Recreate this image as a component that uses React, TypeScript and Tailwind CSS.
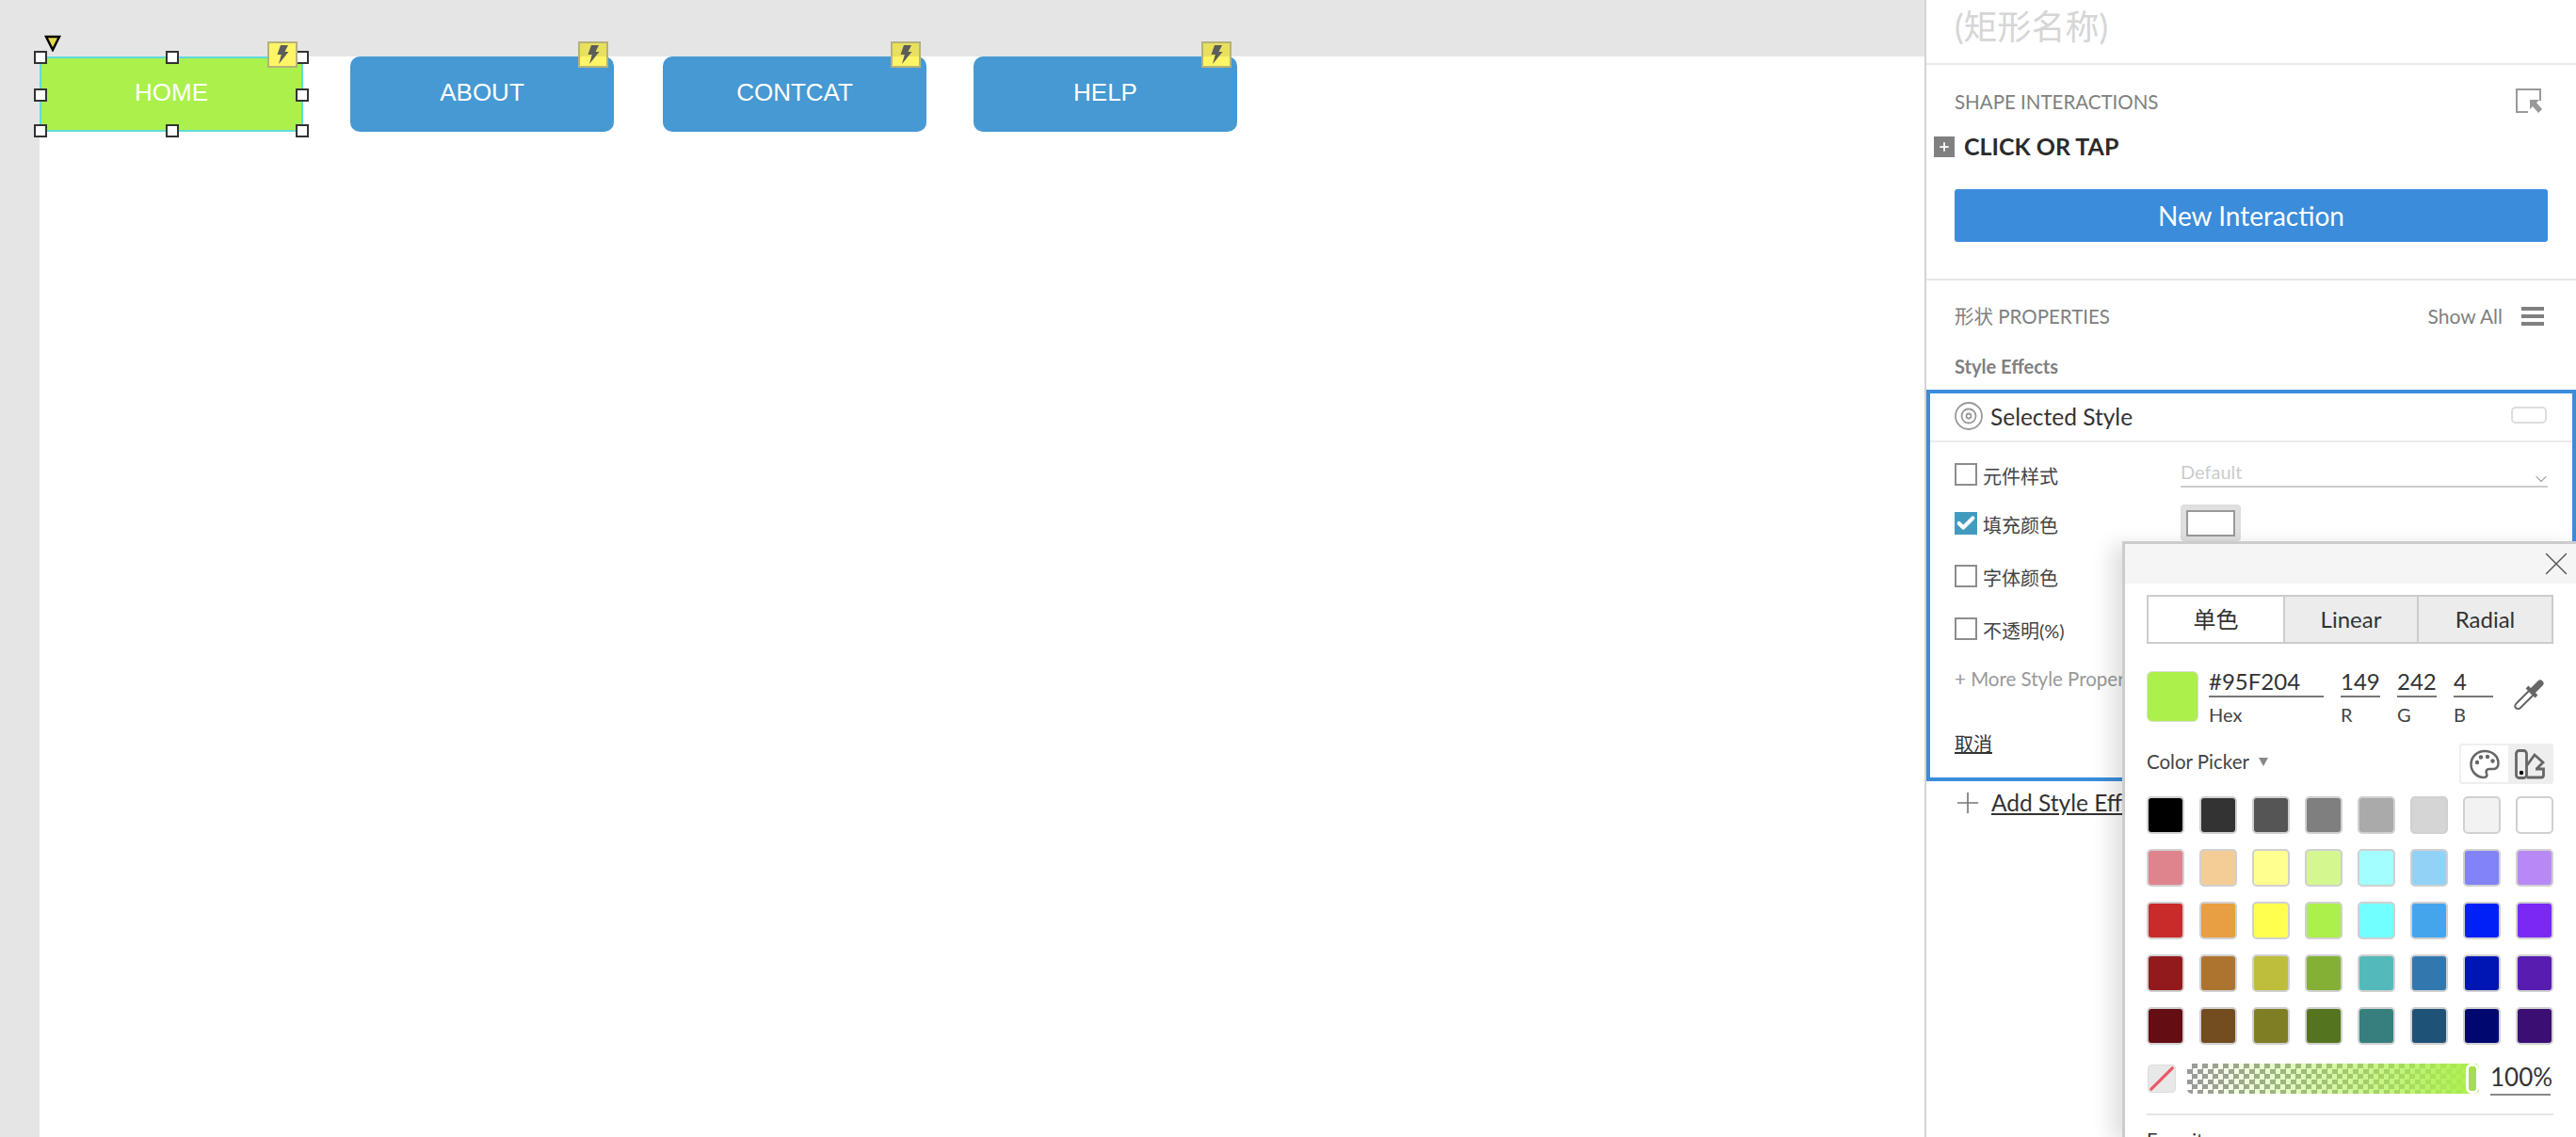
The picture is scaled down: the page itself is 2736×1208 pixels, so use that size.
import { Check, ChevronDown, Plus, X } from 'lucide-react';

const font = 'font-[Lato,"Noto_Sans_CJK_SC",sans-serif]';

const navButtons = [
  { label: 'ABOUT', left: 'left-[372px]', badge: 'left-[614px]' },
  { label: 'CONTCAT', left: 'left-[704px]', badge: 'left-[946px]' },
  { label: 'HELP', left: 'left-[1034px]', badge: 'left-[1276px]' },
];

const handles = [
  'left-[36px] top-[54px]',
  'left-[176px] top-[54px]',
  'left-[314px] top-[54px]',
  'left-[36px] top-[94px]',
  'left-[314px] top-[94px]',
  'left-[36px] top-[132px]',
  'left-[176px] top-[132px]',
  'left-[314px] top-[132px]',
];

const swatches = [
  'bg-[#000000]', 'bg-[#333333]', 'bg-[#555555]', 'bg-[#7f7f7f]', 'bg-[#aaaaaa]', 'bg-[#d5d5d5]', 'bg-[#f2f2f2]', 'bg-[#ffffff]',
  'bg-[#df848d]', 'bg-[#f4cd96]', 'bg-[#ffff90]', 'bg-[#d4f78f]', 'bg-[#a3ffff]', 'bg-[#92d2f6]', 'bg-[#8183f7]', 'bg-[#b889f6]',
  'bg-[#c92a2a]', 'bg-[#e89e42]', 'bg-[#ffff50]', 'bg-[#abf04b]', 'bg-[#72ffff]', 'bg-[#45a5ec]', 'bg-[#0020f5]', 'bg-[#7b28f5]',
  'bg-[#931a1c]', 'bg-[#ad7430]', 'bg-[#bfbd3c]', 'bg-[#83b035]', 'bg-[#54b9ba]', 'bg-[#3278af]', 'bg-[#0016b4]', 'bg-[#581cb0]',
  'bg-[#640d12]', 'bg-[#734c1f]', 'bg-[#807e25]', 'bg-[#55741f]', 'bg-[#377e7e]', 'bg-[#1f5277]', 'bg-[#00086f]', 'bg-[#3a0e72]',
];

function Bolt() {
  return (
    <svg viewBox="0 0 14 20" className="w-[14px] h-[20px]">
      <path d="M5 0h8L9.500 7H13.500L3 20 5.800 10H1.500z" fill="#5c5c5c" />
    </svg>
  );
}

function Badge({ className }: { className: string }) {
  return (
    <div className={`absolute top-[44px] w-[32px] h-[28px] border-2 border-[#b5b27a] flex items-center justify-center ${className}`}>
      <Bolt />
    </div>
  );
}

function SectionCheck({ label, checked }: { label: string; checked?: boolean }) {
  return (
    <div className="w-[240px] h-6 flex items-center shrink-0">
      {checked ? (
        <div className="w-6 h-6 bg-[#429bbf] flex items-center justify-center">
          <Check size={22} strokeWidth={4.5} className="text-white" />
        </div>
      ) : (
        <div className="w-6 h-6 border-2 border-[#8d8d8d] bg-white" />
      )}
      <span className="ml-[6px] mt-[3px] text-[20px] leading-6 text-[#444]">{label}</span>
    </div>
  );
}

function RgbField({ value, label }: { value: string; label: string }) {
  return (
    <div className="w-[42px]">
      <div className="h-[28px] border-b-2 border-[#777] text-[24px] leading-[22px] text-[#333]">{value}</div>
      <div className="mt-[6px] text-[20px] leading-6 text-[#444]">{label}</div>
    </div>
  );
}

export default function App() {
  return (
    <div className={`relative flex w-[2736px] h-[1208px] overflow-hidden bg-white ${font}`}>
      {/* canvas */}
      <div className="relative flex-1 flex flex-col">
        <div className="h-[60px] bg-[#e5e5e5] shrink-0" />
        <div className="flex-1 flex">
          <div className="w-[42px] bg-[#e5e5e5]" />
          <div className="flex-1 bg-white" />
        </div>

        <div className="absolute left-[42px] top-[60px] w-[280px] h-[80px] bg-[#abf04b] border-2 border-[#5fdcd8] flex items-center justify-center font-['Liberation_Sans'] text-[26px] text-white">
          <span className="-mt-[3px]">HOME</span>
        </div>
        {navButtons.map((b) => (
          <div
            key={b.label}
            className={`absolute top-[60px] w-[280px] h-[80px] rounded-[10px] bg-[#4699d2] flex items-center justify-center font-['Liberation_Sans'] text-[26px] text-white ${b.left}`}
          >
            <span className="-mt-[3px]">{b.label}</span>
          </div>
        ))}

        {handles.map((h) => (
          <div key={h} className={`absolute w-[14px] h-[14px] bg-white border-[2.500px] border-[#333] ${h}`} />
        ))}
        <svg viewBox="0 0 18 18" className="absolute left-[47px] top-[37px] w-[18px] h-[18px]">
          <path d="M2 2h14L9 16z" fill="#e3d84e" stroke="#000" strokeWidth="2.500" />
        </svg>
        <Badge className="left-[284px] bg-[#fff566]" />
        {navButtons.map((b) => (
          <Badge
            key={b.label}
            className={`bg-[linear-gradient(#e8e05e_0,#e8e05e_14px,#fff566_14px)] ${b.badge}`}
          />
        ))}
      </div>

      {/* right panel */}
      <div className="relative w-[692px] shrink-0 border-l-2 border-[#d4d4d4] bg-white flex flex-col">
        <div className="h-[69px] shrink-0 pl-[30px] pt-[6px] text-[36px] leading-[44px] text-[#d6d6d6] border-b-2 border-[#e8e8e8]">
          (矩形名称)
        </div>

        <div className="h-[227px] shrink-0 border-b-2 border-[#e8e8e8] box-content px-[30px]">
          <div className="pt-[25px] flex items-center justify-between pr-[6px]">
            <span className="text-[20.500px] leading-[26px] text-[#808080]">SHAPE INTERACTIONS</span>
            <svg viewBox="0 0 28 27" className="w-[28px] h-[27px]">
              <path d="M13 25H1V1h25v12" fill="none" stroke="#999" strokeWidth="2" />
              <path d="M15 12h10l-3 3 6 7-4 4-6-7-3 3z" fill="#999" />
            </svg>
          </div>
          <div className="mt-[24px] -ml-[22px] h-[22px] flex items-center">
            <div className="w-[22px] h-[22px] bg-[#808080] flex items-center justify-center">
              <Plus size={14} strokeWidth={3} className="text-white" />
            </div>
            <span className="ml-[10px] text-[25px] font-bold text-[#2b2b2b]">CLICK OR TAP</span>
          </div>
          <div className="mt-[34px] h-[56px] rounded-[3px] bg-[#3b8cdb] flex items-center justify-center text-[28px] text-white">
            New Interaction
          </div>
        </div>

        <div className="px-[30px] shrink-0">
          <div className="mt-[26px] h-6 flex items-center justify-between pr-[4px]">
            <span className="text-[20.500px] text-[#808080]">形状 PROPERTIES</span>
            <div className="flex items-center gap-[20px]">
              <span className="text-[21px] text-[#808080]">Show All</span>
              <div className="w-6 h-5 flex flex-col justify-between">
                <div className="h-[4px] bg-[#808080]" />
                <div className="h-[4px] bg-[#808080]" />
                <div className="h-[4px] bg-[#808080]" />
              </div>
            </div>
          </div>
          <div className="mt-[29px] h-6 flex items-center text-[20px] font-bold text-[#808080]">Style Effects</div>
        </div>

        {/* selected style block */}
        <div className="mt-[13px] h-[416px] shrink-0 border-4 border-[#3b8cdb]">
          <div className="h-[52px] border-b-2 border-[#eaeaea] pl-[26px] pr-[27px] flex items-center justify-between">
            <div className="flex items-center gap-[8px]">
              <svg viewBox="0 0 30 30" className="w-[30px] h-[30px] -mt-[2px]">
                <circle cx="15" cy="15" r="14" fill="none" stroke="#999" strokeWidth="1.800" />
                <circle cx="15" cy="15" r="7.500" fill="none" stroke="#999" strokeWidth="1.800" />
                <circle cx="15" cy="15" r="2.500" fill="none" stroke="#999" strokeWidth="1.800" />
              </svg>
              <span className="text-[24.500px] text-[#333]">Selected Style</span>
            </div>
            <div className="w-[38px] h-[18px] border-2 border-[#ddd] rounded-[5px] -mt-[4px]" />
          </div>

          <div className="pl-[26px]">
            <div className="mt-[22px] h-6 flex items-start">
              <SectionCheck label="元件样式" />
              <div className="relative w-[390px] h-[28px] -mt-[2px] border-b-2 border-[#ccc] text-[20px] leading-[22px] text-[#ccc]">
                Default
                <ChevronDown size={20} strokeWidth={1.5} className="absolute right-[-3px] top-[9px] text-[#aaa]" />
              </div>
            </div>
            <div className="mt-[28px] h-6 flex items-start">
              <SectionCheck label="填充颜色" checked />
              <div className="w-[64px] h-[39px] -mt-[8px] rounded-[4px] bg-[#e0e0e0] border-2 border-[#ddd] flex items-center justify-center">
                <div className="w-[52px] h-[28px] bg-white border-2 border-[#999]" />
              </div>
            </div>
            <div className="mt-[32px]">
              <SectionCheck label="字体颜色" />
            </div>
            <div className="mt-[32px]">
              <SectionCheck label="不透明(%)" />
            </div>
            <div className="mt-[29px] h-6 flex items-center text-[20.500px] text-[#999]">+ More Style Properties</div>
            <div className="mt-[45px] h-6 flex items-center text-[20px] text-[#333] underline">取消</div>
          </div>
        </div>

        <div className="mt-[11px] h-6 pl-[32px] flex items-center gap-[13px] shrink-0">
          <Plus size={36} strokeWidth={1.1} className="text-[#777] -m-[6px]" />
          <span className="text-[24.500px] text-[#333] underline">Add Style Effect</span>
        </div>

        {/* colour picker popover */}
        <div className="absolute left-[208px] top-[575px] right-0 bottom-0 overflow-hidden border-l-[3px] border-t-[3px] border-[#cccccc] bg-white shadow-[-12px_4px_20px_rgba(0,0,0,0.12)]">
          <div className="h-[42px] bg-[#f5f5f5] flex items-center justify-end">
            <X size={42} strokeWidth={0.8} className="text-[#555]" />
          </div>

          <div className="pl-[23px] pr-[24px]">
            <div className="mt-[12px] h-[52px] flex border-2 border-[#ccc] text-[24px] text-[#333]">
              <div className="w-[143px] bg-white flex items-center justify-center">单色</div>
              <div className="w-[144px] border-x-2 border-[#ccc] bg-[#ececec] flex items-center justify-center">Linear</div>
              <div className="flex-1 bg-[#ececec] flex items-center justify-center">Radial</div>
            </div>

            <div className="mt-[29px] h-[54px] flex">
              <div className="w-[55px] h-[54px] rounded-[6px] bg-[#abf04b] border border-[#ddd]" />
              <div className="ml-[11px] w-[122px]">
                <div className="h-[28px] border-b-2 border-[#777] text-[24px] leading-[22px] text-[#333]">#95F204</div>
                <div className="mt-[6px] text-[20px] leading-6 text-[#444]">Hex</div>
              </div>
              <div className="ml-[18px] flex gap-[18px]">
                <RgbField value="149" label="R" />
                <RgbField value="242" label="G" />
                <RgbField value="4" label="B" />
              </div>
              <svg viewBox="0 0 32 32" className="ml-[22px] mt-[9px] w-[32px] h-[32px]">
                <path d="M17 11L3 25c-2 2-2 4-1 5s3 2 5 0l14-14" fill="none" stroke="#666" strokeWidth="2" />
                <path d="M14 8l10 10" stroke="#666" strokeWidth="4" />
                <path d="M20 12l8-8" stroke="#666" strokeWidth="7" strokeLinecap="round" />
              </svg>
            </div>

            <div className="mt-[23px] h-[43px] flex items-center justify-between">
              <div className="flex items-center gap-[10px] -mt-[4px]">
                <span className="text-[20.500px] text-[#444]">Color Picker</span>
                <div className="w-0 h-0 border-x-[5px] border-x-transparent border-t-[9px] border-t-[#888]" />
              </div>
              <div className="w-[100px] h-[43px] flex rounded-[3px] border-2 border-[#eee] bg-[#eee]">
                <div className="w-[50px] bg-white flex items-center justify-center">
                  <svg viewBox="0 0 32 32" className="w-[32px] h-[32px]">
                    <path
                      d="M16 2C8 2 1.500 8 1.500 16S8 30 15 30c3 0 4-2 3-4-1-3 0-5 3-5h4c3 0 5.500-2 5.500-6C30.500 7 24 2 16 2z"
                      fill="none"
                      stroke="#666"
                      strokeWidth="2.500"
                    />
                    <circle cx="8" cy="14" r="2.200" fill="#666" />
                    <circle cx="12" cy="8.500" r="2.200" fill="#666" />
                    <circle cx="19" cy="8" r="2.200" fill="#666" />
                    <circle cx="24.500" cy="12.500" r="2.200" fill="#666" />
                  </svg>
                </div>
                <div className="flex-1 flex items-center justify-center">
                  <svg viewBox="0 0 32 32" className="w-[32px] h-[32px]">
                    <rect x="1.500" y="1.500" width="11" height="29" rx="3" fill="none" stroke="#666" strokeWidth="2.800" />
                    <path d="M13 17L21 6l9 8-7 7M13 30h15c1.500 0 2.500-1 2.500-2.500V21H22" fill="none" stroke="#666" strokeWidth="2.800" />
                    <circle cx="7" cy="25" r="2.200" fill="#000" />
                  </svg>
                </div>
              </div>
            </div>

            <div className="mt-[13px] grid grid-cols-[repeat(8,40px)] justify-between gap-y-[16px]">
              {swatches.map((c, i) => (
                <div key={i} className={`h-[40px] rounded-[5px] border-2 border-[#d0d0d0] ${c}`} />
              ))}
            </div>

            <div className="mt-[20px] h-[32px] flex items-center">
              <svg viewBox="0 0 30 30" className="w-[30px] h-[30px] ml-px rounded-[4px] border border-[#ddd] bg-[#e8e8e8]">
                <path d="M3 27L27 3" stroke="#ea5a68" strokeWidth="3.500" strokeLinecap="round" />
              </svg>
              <div className="relative ml-[12px] w-[310px] h-[32px] rounded-[5px] overflow-hidden bg-[conic-gradient(#999_25%,#fff_0_50%,#999_0_75%,#fff_0)] bg-[length:11px_11px]">
                <div className="absolute inset-0 bg-linear-to-r from-[#abf04b00] to-[#abf04b]" />
                <div className="absolute right-0 top-0 w-[14px] h-[32px] rounded-[6px] border-[3px] border-white bg-[#a6dc55]" />
              </div>
              <div className="ml-[12px] w-[64px] h-[34px] mt-[2px] border-b-2 border-[#888] text-[26px] leading-[28px] text-[#333] text-center">100%</div>
            </div>

            <div className="mt-[21px] h-[2px] bg-[#e5e5e5]" />
            <div className="mt-[13px] text-[20px] leading-6 text-[#333]">Favorites</div>
          </div>
        </div>
      </div>
    </div>
  );
}
